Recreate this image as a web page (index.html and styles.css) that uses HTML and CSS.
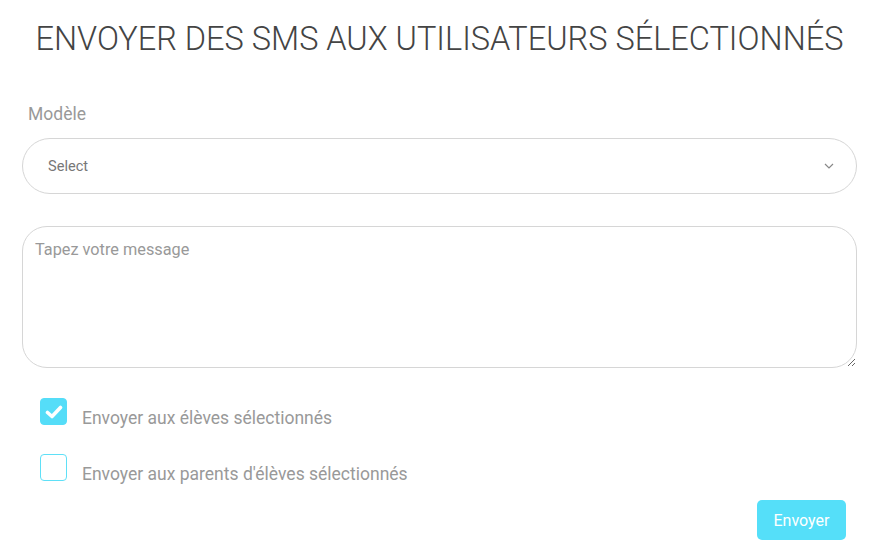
FILE: index.html
```html
<!DOCTYPE html>
<html lang="fr">
<head>
<meta charset="utf-8">
<title>Envoyer des SMS</title>
<link rel="stylesheet" href="styles.css">
</head>
<body>
<div class="page">
  <h1 class="title">ENVOYER DES SMS AUX UTILISATEURS SÉLECTIONNÉS</h1>
  <div class="field-label">Modèle</div>
  <div class="select-box">
    <span class="select-text">Select</span>
    <svg class="chevron" width="10" height="6" viewBox="0 0 10 6"><path d="M1 1 L5 5 L9 1" fill="none" stroke="#888" stroke-width="1.2"/></svg>
  </div>
  <textarea class="message" placeholder="Tapez votre message"></textarea>
  <div class="check-row">
    <span class="checkbox checked">
      <svg width="18" height="14" viewBox="0 0 18 14"><path d="M2.5 7.5 L7 11.5 L15.5 2.5" fill="none" stroke="#fff" stroke-width="3.6" stroke-linecap="round" stroke-linejoin="round"/></svg>
    </span>
    <span class="check-label">Envoyer aux élèves sélectionnés</span>
  </div>
  <div class="check-row">
    <span class="checkbox"></span>
    <span class="check-label">Envoyer aux parents d'élèves sélectionnés</span>
  </div>
  <div class="actions">
    <button class="send">Envoyer</button>
  </div>
</div>
</body>
</html>
```
FILE: styles.css
```css
html, body {
  margin: 0;
  padding: 0;
  background: #fff;
}
body {
  font-family: Roboto, "Liberation Sans", sans-serif;
}
.page {
  padding: 19px 30px 0 22px;
}
.title {
  margin: 0;
  font-weight: 300;
  font-size: 32.5px;
  line-height: 40px;
  text-align: center;
  color: #444;
}
.field-label {
  margin-top: 45px;
  padding-left: 6px;
  font-size: 17.5px;
  line-height: 20px;
  color: #999;
}
.select-box {
  margin-top: 14px;
  box-sizing: border-box;
  height: 56px;
  border: 1px solid #d6d6d6;
  border-radius: 28px;
  display: flex;
  align-items: center;
  justify-content: space-between;
  padding: 0 22px 0 25px;
}
.select-text {
  font-size: 14.6px;
  color: #777;
}
.chevron {
  display: block;
}
.message {
  display: block;
  margin-top: 32px;
  box-sizing: border-box;
  width: 100%;
  height: 142px;
  border: 1px solid #d6d6d6;
  border-radius: 25px;
  padding: 14px 12px;
  font-family: Roboto, "Liberation Sans", sans-serif;
  font-size: 16.3px;
  line-height: 18px;
  color: #555;
  resize: vertical;
  outline: none;
}
.message::placeholder {
  color: #999;
}
.check-row {
  display: flex;
  align-items: flex-start;
  height: 30px;
  padding-left: 18px;
  margin-top: 26px;
}
.message + .check-row {
  margin-top: 30px;
}
.checkbox {
  box-sizing: border-box;
  width: 27px;
  height: 27px;
  border: 1px solid #5fe0f7;
  border-radius: 4px;
  display: flex;
  align-items: center;
  justify-content: center;
  flex-shrink: 0;
}
.checkbox.checked {
  background: #55ddf8;
  border-color: #55ddf8;
}
.check-label {
  margin-left: 15px;
  margin-top: 10px;
  font-size: 17.5px;
  line-height: 20px;
  color: #999;
}
.actions {
  display: flex;
  justify-content: flex-end;
  margin-top: 16px;
  padding-right: 11px;
}
.send {
  width: 89px;
  height: 40px;
  border: none;
  border-radius: 5px;
  background: #55dff9;
  color: #fff;
  font-family: Roboto, "Liberation Sans", sans-serif;
  font-size: 16px;
  cursor: pointer;
}
```
